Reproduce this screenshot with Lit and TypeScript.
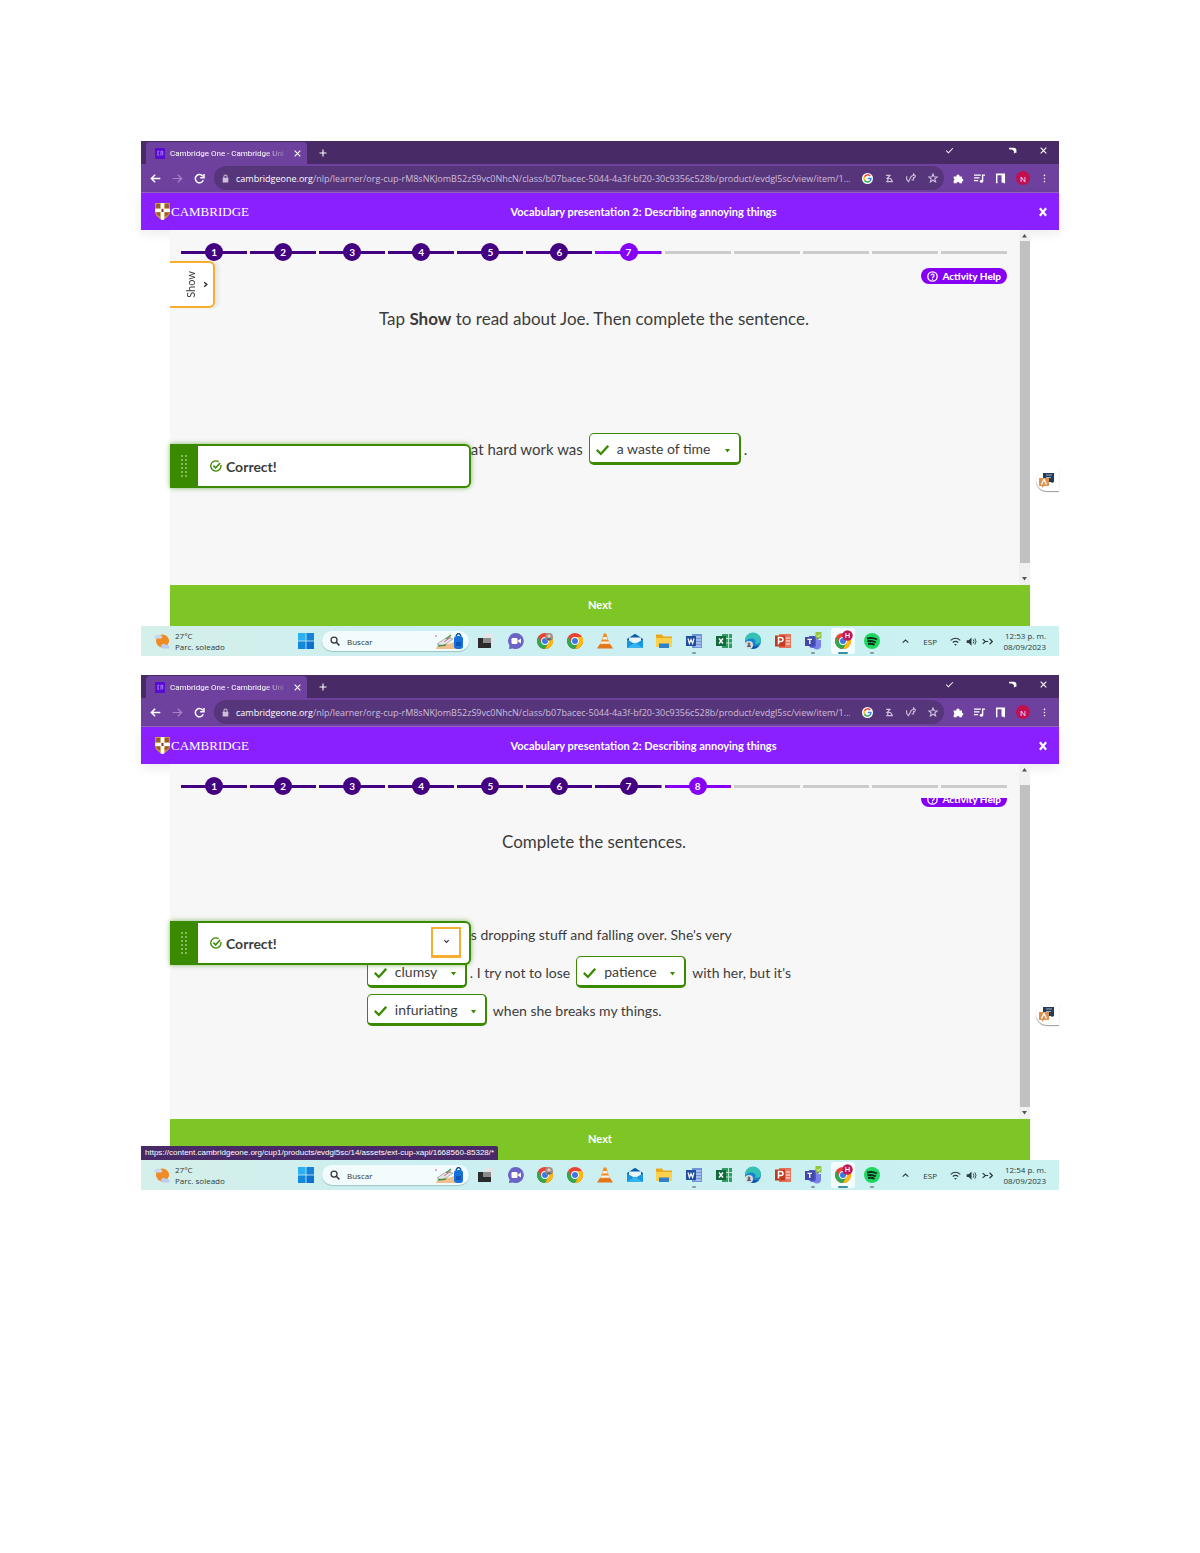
import { LitElement, html, css, svg, nothing } from "lit";
import { customElement, property } from "lit/decorators.js";
import { classMap } from "lit/directives/class-map.js";

type Piece = string | { answer: string };

interface Screen {
  title: string;
  step: number;
  prompt: unknown;
  lines: Piece[][];
  scrolled: boolean;
  drawer: boolean;
  expandable: boolean;
  clock: string;
  status: string;
}

const SCREENS: Screen[] = [
  {
    title: "Vocabulary presentation 2: Describing annoying things",
    step: 7,
    prompt: html`Tap <b>Show</b> to read about Joe. Then complete the sentence.`,
    lines: [["at hard work was", { answer: "a waste of time" }, "."]],
    scrolled: false,
    drawer: true,
    expandable: false,
    clock: "12:53 p. m.",
    status: "",
  },
  {
    title: "Vocabulary presentation 2: Describing annoying things",
    step: 8,
    prompt: html`Complete the sentences.`,
    lines: [
      ["s dropping stuff and falling over. She's very"],
      [{ answer: "clumsy" }, ". I try not to lose", { answer: "patience" }, "with her, but it's"],
      [{ answer: "infuriating" }, "when she breaks my things."],
    ],
    scrolled: true,
    drawer: false,
    expandable: true,
    clock: "12:54 p. m.",
    status:
      "https://content.cambridgeone.org/cup1/products/evdgl5sc/14/assets/ext-cup-xapi/1668560-85328/*",
  },
];

const base = css`
  :host {
    display: block;
    font-family: Lato, "Open Sans", sans-serif;
  }
  *,
  *::before,
  *::after {
    box-sizing: border-box;
  }
  button,
  input,
  select {
    font: inherit;
    color: inherit;
    background: none;
    border: 0;
    padding: 0;
    margin: 0;
    outline: 0;
  }
  button {
    display: grid;
    place-items: center;
    cursor: pointer;
  }
  svg {
    display: block;
    flex: none;
  }
`;

const draw = (size: number, body: unknown) =>
  html`<svg width=${size} height=${size} viewBox="0 0 16 16" fill="none" aria-hidden="true">${body}</svg>`;

const chromeBall = svg`
  <circle cx="8" cy="8" r="8" fill="#ea4335"/>
  <path d="M1.1 4A8 8 0 0 0 7.9 16l3.6-6H4.6z" fill="#2fa84f"/>
  <path d="M14.9 4A8 8 0 0 1 7.9 16l3.6-6L8.2 4z" fill="#fbbc05"/>
  <circle cx="8" cy="8" r="3.9" fill="#fff"/>
  <circle cx="8" cy="8" r="3" fill="#3b78e7"/>`;

const icons = {
  back: svg`<path d="M15 8H2M7.5 2.5 2 8l5.500 5.500" stroke="currentColor" stroke-width="2.200"/>`,
  forward: svg`<path d="M1 8h13M8.500 2.500 14 8l-5.500 5.500" stroke="currentColor" stroke-width="1.800"/>`,
  reload: svg`<path d="M13 5A6 6 0 1 0 13.500 10.500" stroke="currentColor" stroke-width="2.200"/><path d="M9 7h5.500V1.500" stroke="currentColor" stroke-width="2.200"/>`,
  lock: svg`<rect x="3" y="6.500" width="10" height="8.500" rx="1" fill="currentColor"/><path d="M5.200 7V4.500a2.800 2.800 0 0 1 5.600 0V7" stroke="currentColor" stroke-width="1.800"/>`,
  close: svg`<path d="m3 3 10 10M13 3 3 13" stroke="currentColor" stroke-width="2"/>`,
  heavyClose: svg`<path d="m3 2 10 12M13 2 3 14" stroke="currentColor" stroke-width="3.400"/>`,
  plus: svg`<path d="M8 1v14M1 8h14" stroke="currentColor" stroke-width="2.200"/>`,
  check: svg`<path d="m2 8 4 4 8-8" stroke="currentColor" stroke-width="1.800"/>`,
  restore: svg`<path d="M2 3h8a5 5 0 0 1 5 5v4h-3l-1.500 2V9L7 6H2z" fill="currentColor"/>`,
  google: svg`<circle cx="8" cy="8" r="8" fill="#fff"/>
    <path d="M12 4.500A5 5 0 0 0 3.600 5.700" stroke="#ea4335" stroke-width="2.200"/>
    <path d="M3.600 5.700a5 5 0 0 0 0 4.600" stroke="#fbbc05" stroke-width="2.200"/>
    <path d="M3.600 10.300A5 5 0 0 0 11.500 11.600" stroke="#34a853" stroke-width="2.200"/>
    <path d="M11.500 11.600A5 5 0 0 0 13 8H8.300" stroke="#4285f4" stroke-width="2.200"/>`,
  translate: svg`<path d="M2 2.500h8M9 2.500 4 8h6M2 13.500h12M5 8v5M10 8l3 5" stroke="currentColor" stroke-width="2.200"/>`,
  share: svg`<path d="M1 5v5l3 4 4-8M7 8c1-3 3-4 5-4V1.500L15.500 5 12 9V6.500" stroke="currentColor" stroke-width="1.800"/><path d="M9 11h4" stroke="currentColor" stroke-width="1.800"/>`,
  star: svg`<path d="m8 1.500 1.800 4.600 4.900.3-3.800 3.100 1.300 4.800L8 11.600l-4.200 2.700 1.300-4.800-3.800-3.100 4.900-.3z" stroke="currentColor" stroke-width="1.800"/>`,
  puzzle: svg`<path d="M1 5h4a2.300 2.300 0 1 1 4.500 0H13v3.500a2 2 0 1 1 0 4V15H9.500a2.200 2.200 0 0 0-4.300 0H1v-3.800a2.200 2.200 0 0 0 0-3.600z" fill="currentColor"/>`,
  music: svg`<path d="M0 3h10M0 7h8M0 11h6M12.500 12V3H16" stroke="currentColor" stroke-width="2"/><circle cx="10.800" cy="12" r="2.300" fill="currentColor"/>`,
  panel: svg`<path d="M2.500 15V2h11v13" stroke="currentColor" stroke-width="2.200"/><path d="M9.500 2h4v12h-4z" fill="currentColor"/>`,
  dots: svg`<circle cx="8" cy="2.500" r="1.400" fill="currentColor"/><circle cx="8" cy="8" r="1.400" fill="currentColor"/><circle cx="8" cy="13.500" r="1.400" fill="currentColor"/>`,
  help: svg`<circle cx="8" cy="8" r="6.800" stroke="currentColor" stroke-width="2"/><path d="M5.800 6.600a2.200 2.200 0 1 1 3.300 1.900Q8 9 8 10" stroke="currentColor" stroke-width="1.800"/><circle cx="8" cy="12" r="1" fill="currentColor"/>`,
  badge: svg`<path d="M14.500 6.500A6.800 6.800 0 1 1 11.500 2.200" stroke="#3a8a00" stroke-width="1.800"/><path d="m4.500 7.500 3 3 6-6.500" stroke="#3a8a00" stroke-width="2"/>`,
  windows: svg`<path d="M0 0h7.600v7.600H0z" fill="#2bb0f0"/><path d="M8.400 0H16v7.600H8.400z" fill="#1583dc"/><path d="M0 8.400h7.600V16H0z" fill="#1389dd"/><path d="M8.400 8.400H16V16H8.400z" fill="#0c72d0"/>`,
  lens: svg`<circle cx="6.500" cy="6.500" r="4.800" stroke="#333" stroke-width="2"/><path d="m10 10 5 5" stroke="#333" stroke-width="2.400"/>`,
  tasks: svg`<path d="M5 1h11v10H5z" fill="#e4e6e6"/><path d="M0 5h13v10H0z" fill="#2b2b2b"/><path d="M5 5h8v5H5z" fill="#8a8c8d"/>`,
  meet: svg`<path d="M8 0a8 8 0 1 1-3 15.500L.8 16l.8-3.300A8 8 0 0 1 8 0z" fill="#6b63c6"/><rect x="3.500" y="5" width="6" height="6" rx="1.200" fill="#fff"/><path d="m10 7.500 3-2v5l-3-2z" fill="#fff"/>`,
  chrome: chromeBall,
  chromeUser: svg`${chromeBall}<circle cx="12" cy="4" r="4" fill="#a58f84"/><circle cx="12" cy="3" r="1.600" fill="#e8d3c5"/><path d="M9.500 7a2.600 2.600 0 0 1 5 0z" fill="#5d6573"/>`,
  chromeTagged: svg`${chromeBall}<circle cx="12.500" cy="2.500" r="5.200" fill="#c2185b"/><path d="M10.800 5V0M14.200 5V0M10.800 2.500h3.400" stroke="#fff" stroke-width="1"/>`,
  cone: svg`<path d="M6.800.5h2.400L13 12H3z" fill="#f28a1c"/><path d="M6 4h4l.9 2.600H5.100zM4.300 8.500h7.400l.8 2.300h-9z" fill="#f6efe8"/><path d="M2.500 11.500h11L16 15.500H0z" fill="#e2761b"/>`,
  mail: svg`<path d="M0 6 8 .8 16 6v3H0z" fill="#0a5ea8"/><path d="M2 4.500h12V10H2z" fill="#e9f6fd"/><path d="M0 6.500 8 11l8-4.500V15H0z" fill="#1c94e0"/><path d="m0 15 8-5.500L16 15z" fill="#35b3f2"/>`,
  folder: svg`<path d="M0 1.500h6l1.500 2H16V14H0z" fill="#e9a91e"/><path d="M0 5h16v9H0z" fill="#fccf4d"/><path d="M3 10.500h10V15H3z" fill="#2d80c9"/>`,
  word: svg`<path d="M6 1h10v14H6z" fill="#6d93d8"/><path d="M9 4h6M9 7h6M9 10h6M9 13h6" stroke="#dce7fa" stroke-width="1"/><path d="M0 3h10v10H0z" fill="#1f4e9e"/><path d="m2 5.500 1.400 5L5 6.500l1.600 4 1.400-5" stroke="#fff" stroke-width="1.200"/>`,
  excel: svg`<path d="M6 1h10v14H6z" fill="#2f9e62"/><path d="M9 5.500h7M9 10h7M12.500 1v14" stroke="#bfe5cf" stroke-width="1"/><path d="M0 3h10v10H0z" fill="#11693a"/><path d="m3 5.500 4 5M7 5.500l-4 5" stroke="#fff" stroke-width="1.500"/>`,
  edge: svg`<circle cx="8" cy="8" r="8" fill="#1784d0"/><path d="M0 8a8 8 0 0 1 16-1c.3 3-3 4.500-6 3.500 2-3-1-5.500-4-5S0 8 0 8z" fill="#35c1b4"/><path d="M6 9c-1 3 3 6 8 3.500A8 8 0 0 1 6 15.500z" fill="#0c4fa0"/><circle cx="4" cy="12" r="4" fill="#d8dde2"/><path d="M2 14a2 2 0 0 1 4 0z" fill="#4f5a66"/><circle cx="4" cy="11" r="1.400" fill="#7b6a60"/>`,
  power: svg`<path d="M4 1h12v14H4z" fill="#e8735b"/><path d="M11 5h4M11 8h4M11 11h4" stroke="#fff" stroke-width="1.200"/><path d="M0 2.500h10v11H0z" fill="#c23b1e"/><path d="M3.500 11.500v-7H6a2 2 0 0 1 0 4H3.500" stroke="#fff" stroke-width="1.500"/>`,
  teams: svg`<circle cx="12" cy="4.500" r="2.300" fill="#5b62c4"/><path d="M8 7h8v5a3.500 3.500 0 0 1-8 1z" fill="#7b83eb"/><path d="M4 3h7v10a4 4 0 0 1-7 0z" fill="#5059c9"/><path d="M0 4h9.500v9H0z" fill="#4148ad"/><path d="M2.500 6.300H7M4.800 6.300V11" stroke="#fff" stroke-width="1.300"/><path d="M10.500-1h6v6.500h-6z" fill="#93c83e"/><path d="m12 2.500 1.200 1.200 2-2.200" stroke="#fff" stroke-width=".9"/>`,
  spotify: svg`<circle cx="8" cy="8" r="8" fill="#1ed760"/><path d="M3 5.500c3.500-1 7-.7 10 1M3.500 8.300c3-.8 5.800-.4 8.300 1M4 11c2.500-.6 4.600-.3 6.500.8" stroke="#0b2a17" stroke-width="2"/>`,
  caretUp: svg`<path d="m3 10 5-4.500L13 10" stroke="currentColor" stroke-width="2"/>`,
  wifi: svg`<path d="M1 6.500q7-6.500 14 0M4 9.500q4-3.500 8 0" stroke="currentColor" stroke-width="1.600"/><path d="m6 11.500 2 2.500 2-2.500z" fill="currentColor"/>`,
  sound: svg`<path d="M1 6h3l4-4v12l-4-4H1z" fill="currentColor"/><path d="M10.500 5q2 3 0 6M13 3.500q3 4.500 0 9" stroke="currentColor" stroke-width="1.300"/>`,
  battery: svg`<path d="M1 4.500 5 8l-4 3.500M5 8h4M11 4l4 4-4 4" stroke="currentColor" stroke-width="1.800"/>`,
  weather: svg`<circle cx="8.500" cy="8" r="6.500" fill="#f08a24"/><path d="M0 5.500C0 2 4 0 7 2.500c2 .5 1.500 3-.5 3H1z" fill="#c8d8f3"/><path d="M7 13.500c0-3 4-3.500 5-1.500 3-.5 5 3 2.500 3.500H8.500Q7 15 7 13.500z" fill="#b9cdf0"/>`,
  shield: svg`<path d="M1 0h14v8.500Q15 13 8 16 1 13 1 8.500z" fill="#c89a3c"/><path d="M2 1h4v4H2zM10 1h4v4h-4zM2 9h4v4L3 11zM10 9h4q0 2-4 4z" fill="#9c5a33"/><path d="M6.300 0h3.400v5.500H15v3H9.700v7L8 16l-1.700-.5v-7H1v-3h5.300z" fill="#fff"/><path d="M7 5.500h2v3H7z" fill="#8c3a2a"/>`,
};

@customElement("browser-chrome")
export class BrowserChrome extends LitElement {
  static styles = [
    base,
    css`
      :host {
        color: #fff;
        font-family: "Open Sans", "Noto Sans", sans-serif;
      }
      .tabs {
        height: 23px;
        display: flex;
        align-items: stretch;
        background: #472a66;
        padding: 0 8px 0 5px;
      }
      .tab {
        width: 161px;
        display: flex;
        align-items: center;
        gap: 5px;
        padding: 0 5px 0 9px;
        margin-top: 1px;
        border-radius: 4px 4px 0 0;
        background: #6f419f;
        font-family: Roboto, "Open Sans", sans-serif;
        font-size: 8px;
      }
      .favicon {
        width: 10px;
        height: 11px;
        display: grid;
        place-items: center;
        background: #5a0bd0;
        flex: none;
      }
      .tab-title {
        flex: 1;
        white-space: nowrap;
        -webkit-mask-image: linear-gradient(to right, #000 80%, transparent);
        mask-image: linear-gradient(to right, #000 80%, transparent);
      }
      .new-tab {
        width: 31px;
      }
      .window {
        margin-left: auto;
        display: flex;
      }
      .window button {
        width: 31px;
        height: 19px;
      }
      .window button:last-child {
        width: 16px;
        margin-left: 7px;
      }
      .window button:first-child {
        margin-right: 32px;
      }
      .bar {
        height: 29px;
        display: flex;
        align-items: center;
        background: #6f419f;
        border-bottom: 1px solid #9268b8;
        padding: 0 10px 0 9px;
      }
      .nav {
        display: flex;
        gap: 11px;
        padding-right: 9px;
      }
      .nav .off {
        color: #a583c8;
      }
      .address {
        flex: 1;
        min-width: 0;
        height: 24px;
        display: flex;
        align-items: center;
        gap: 12px;
        border-radius: 12px;
        background: #56357a;
        padding: 0 6px 0 7px;
        color: #cdbfdc;
        font-size: 9px;
      }
      .url {
        flex: 1;
        min-width: 0;
        display: flex;
        align-items: center;
      }
      .host {
        color: #fff;
      }
      .url input {
        flex: 1;
        min-width: 0;
      }
      .url-lock {
        padding-right: 6px;
      }
      .extras {
        display: flex;
        align-items: center;
        gap: 10px;
        padding-left: 9px;
      }
      .avatar {
        width: 14px;
        height: 14px;
        border-radius: 50%;
        background: #c2104f;
        font-size: 8px;
      }
    `,
  ];

  render() {
    return html`
      <div class="tabs">
        <div class="tab">
          <span class="favicon">${draw(7, svg`<path d="M5 3H2v9h3M9 13V3h4v9" stroke="#b98cff" stroke-width="2"/>`)}</span>
          <span class="tab-title">Cambridge One - Cambridge Uni</span>
          <button aria-label="Close tab">${draw(9, icons.close)}</button>
        </div>
        <button class="new-tab" aria-label="New tab">${draw(8, icons.plus)}</button>
        <div class="window">
          <button aria-label="Minimize">${draw(9, icons.check)}</button>
          <button aria-label="Restore">${draw(9, icons.restore)}</button>
          <button aria-label="Close">${draw(9, icons.close)}</button>
        </div>
      </div>
      <div class="bar">
        <div class="nav">
          <button aria-label="Back">${draw(11, icons.back)}</button>
          <button class="off" aria-label="Forward">${draw(11, icons.forward)}</button>
          <button aria-label="Reload">${draw(11, icons.reload)}</button>
        </div>
        <div class="address">
          <label class="url">
            <span class="url-lock">${draw(9, icons.lock)}</span>
            <span class="host">cambridgeone.org</span>
            <input
              aria-label="Address"
              value="/nlp/learner/org-cup-rM8sNKJomB52zS9vc0NhcN/class/b07bacec-5044-4a3f-bf20-30c9356c528b/product/evdgl5sc/view/item/1..."
            />
          </label>
          <button aria-label="Google">${draw(11, icons.google)}</button>
          <button aria-label="Translate">${draw(9, icons.translate)}</button>
          <button aria-label="Share">${draw(10, icons.share)}</button>
          <button aria-label="Bookmark">${draw(10, icons.star)}</button>
        </div>
        <div class="extras">
          <button aria-label="Extensions">${draw(11, icons.puzzle)}</button>
          <button aria-label="Media">${draw(11, icons.music)}</button>
          <button aria-label="Side panel">${draw(11, icons.panel)}</button>
          <button class="avatar">N</button>
          <button aria-label="Menu">${draw(9, icons.dots)}</button>
        </div>
      </div>
    `;
  }
}

@customElement("task-bar")
export class TaskBar extends LitElement {
  @property() clock = "";

  static styles = [
    base,
    css`
      :host {
        font-family: "Open Sans", "Noto Sans", sans-serif;
        color: #2a3a3c;
      }
      .bar {
        height: 30px;
        display: flex;
        align-items: center;
        background: linear-gradient(to right, #d5efe9, #cceff2 30%, #cbf1f1);
        padding: 0 13px;
        font-size: 8px;
        line-height: 11px;
      }
      .weather {
        width: 144px;
        display: flex;
        align-items: center;
        gap: 5px;
      }
      .search {
        width: 147px;
        height: 20px;
        display: flex;
        align-items: center;
        gap: 7px;
        margin-left: 8px;
        padding: 0 5px 0 8px;
        border-radius: 10px;
        background: #f3fcfc;
        box-shadow: 0 1px 1px #9fc4c4;
      }
      .search input {
        flex: 1;
        min-width: 0;
      }
      .search input::placeholder {
        color: #333;
        opacity: 1;
      }
      .apps {
        flex: 1;
        display: flex;
        justify-content: space-between;
        padding: 0 17px 0 5px;
      }
      .app {
        position: relative;
        width: 24px;
        height: 26px;
        border-radius: 3px;
      }
      .app svg {
        overflow: visible;
      }
      .current {
        background: #f3fdfd;
      }
      .open::after,
      .current::after {
        content: "";
        position: absolute;
        left: 10px;
        right: 10px;
        bottom: 0;
        height: 2px;
        border-radius: 1px;
        background: #8a9a9c;
      }
      .current::after {
        left: 7px;
        right: 7px;
        background: #3d8f9f;
      }
      .tray {
        display: flex;
        align-items: center;
        gap: 5px;
      }
      .lang {
        padding: 0 8px;
      }
      .time {
        width: 48px;
        text-align: right;
        white-space: nowrap;
      }
    `,
  ];

  private app(label: string, icon: unknown, state = "") {
    return html`<button class="app ${state}" aria-label=${label}>${draw(16, icon)}</button>`;
  }

  render() {
    return html`
      <div class="bar">
        <div class="weather">
          ${draw(16, icons.weather)}
          <div>27°C<br />Parc. soleado</div>
        </div>
        <button aria-label="Start">${draw(16, icons.windows)}</button>
        <label class="search">
          ${draw(10, icons.lens)}
          <input aria-label="Buscar" placeholder="Buscar" />
          <svg width="30" height="16" viewBox="0 0 30 16" aria-hidden="true">
            <path d="M2 15c4-6 10-2 18-6l1 7H2z" fill="#efc08d" />
            <path d="m3 11 9-6 7 1-10 7z" fill="#e3e9ea" stroke="#a9b0ad" />
            <path d="m4 13 8-1M12 6l5-4" stroke="#4f8f4a" stroke-width="1.500" />
            <path d="m10 9 7-5" stroke="#e06a8a" />
            <circle cx="2" cy="3" r="1" fill="#d98be0" />
            <rect x="20" y="3" width="9" height="13" rx="3" fill="#176fdc" />
            <path d="M22 3q2.500-5 5 0" stroke="#0d4fa8" stroke-width="1.500" fill="none" />
            <path d="M22 9h5v4h-5z" fill="#0c55b8" />
          </svg>
        </label>
        <nav class="apps">
          ${this.app("Task view", icons.tasks)} ${this.app("Chat", icons.meet)}
          ${this.app("Chrome profile", icons.chromeUser)} ${this.app("Chrome", icons.chrome)}
          ${this.app("VLC", icons.cone)} ${this.app("Mail", icons.mail)}
          ${this.app("Explorer", icons.folder)} ${this.app("Word", icons.word, "open")}
          ${this.app("Excel", icons.excel)} ${this.app("Edge", icons.edge)}
          ${this.app("PowerPoint", icons.power)} ${this.app("Teams", icons.teams, "open")}
          ${this.app("Chrome N", icons.chromeTagged, "current")}
          ${this.app("Spotify", icons.spotify, "open")}
        </nav>
        <div class="tray">
          ${draw(9, icons.caretUp)}
          <span class="lang">ESP</span>
          ${draw(11, icons.wifi)} ${draw(11, icons.sound)} ${draw(11, icons.battery)}
          <div class="time">${this.clock}<br />08/09/2023</div>
        </div>
      </div>
    `;
  }
}

@customElement("lesson-screen")
export class LessonScreen extends LitElement {
  @property({ attribute: false }) data!: Screen;

  static styles = [
    base,
    css`
      :host {
        color: #3c3c3c;
      }
      .screen {
        position: relative;
      }
      .header {
        position: relative;
        z-index: 1;
        height: 37px;
        display: flex;
        align-items: center;
        padding: 0 11px 0 13px;
        background: #8a20ff;
        color: #fff;
        box-shadow: 0 4px 12px rgb(0 0 0 / 8%);
      }
      .brand {
        display: flex;
        align-items: center;
        font: 13px "Liberation Serif", serif;
      }
      .title {
        flex: 1;
        margin: 0;
        font-size: 11px;
        font-weight: 700;
        text-align: center;
      }
      .body {
        position: relative;
        z-index: 2;
        height: 355px;
        display: flex;
        margin: 0 29px;
        background: #f7f7f7;
      }
      .main {
        flex: 1;
        min-width: 0;
        display: flex;
        flex-direction: column;
        padding: 13px 12px 0 11px;
      }
      .steps {
        display: flex;
        gap: 3px;
        list-style: none;
        margin: 0;
        padding: 0 0 3px;
      }
      .step {
        flex: 1;
        height: 18px;
        display: grid;
        place-items: center;
        background: linear-gradient(#cbcbcb, #cbcbcb) center / 100% 3px no-repeat;
      }
      .done {
        background-image: linear-gradient(#430080, #430080);
      }
      .now {
        background-image: linear-gradient(#8500f5, #8500f5);
      }
      .dot {
        width: 18px;
        height: 18px;
        border-radius: 50%;
        background: #430080;
        color: #fff;
        font-size: 10px;
        font-weight: 700;
        line-height: 18px;
        text-align: center;
      }
      .now .dot {
        background: #8500f5;
      }
      .scroller {
        flex: 1;
        min-height: 0;
        overflow: hidden;
      }
      .content {
        display: flex;
        flex-direction: column;
        padding-top: 4px;
      }
      .scrolled {
        margin-top: -11px;
      }
      .help {
        align-self: flex-end;
        height: 16px;
        display: flex;
        align-items: center;
        gap: 4px;
        padding: 0 6px;
        border-radius: 8px;
        background: #8500f5;
        color: #fff;
        font-size: 10px;
        font-weight: 900;
      }
      .prompt {
        margin: 24px 0 0;
        font-size: 17px;
        line-height: 22px;
        font-weight: 400;
        text-align: center;
      }
      .exercise {
        min-height: 238px;
        width: 55%;
        margin: 0 auto;
        display: flex;
        flex-direction: column;
        justify-content: center;
        font-size: 14px;
      }
      .line {
        height: 38px;
        display: flex;
        align-items: center;
        gap: 6px;
        white-space: nowrap;
      }
      .line:first-child {
        padding-left: 104px;
      }
      .line:only-child {
        font-size: 15px;
      }
      .answer {
        position: relative;
        display: flex;
      }
      .answer + .tight {
        margin-left: -3px;
      }
      .answer select {
        appearance: none;
        height: 32px;
        padding: 0 27px;
        border: 1px solid #3a8a00;
        border-width: 1px 2px 3px 1px;
        border-radius: 5px;
        background: #fff;
        font-size: 14px;
      }
      .answer svg {
        position: absolute;
        top: 10px;
        left: 7px;
      }
      .answer svg.caret {
        top: 16px;
        left: auto;
        right: 11px;
      }
      .rail {
        width: 11px;
        display: flex;
        flex-direction: column;
        align-items: center;
        gap: 2px;
        background: #f1f1f1;
        padding: 4px 0;
        color: #555;
      }
      .thumb {
        width: 10px;
        flex: 1;
        background: #c1c1c1;
        margin: 1px 0 12px;
      }
      .low .thumb {
        margin: 11px 0 2px;
      }
      .drawer {
        position: absolute;
        top: 31px;
        left: 0;
        width: 45px;
        height: 47px;
        display: flex;
        align-items: center;
        justify-content: flex-end;
        gap: 5px;
        padding-right: 4px;
        border: 2px solid #f7ae2f;
        border-left: 0;
        border-radius: 0 6px 6px 0;
        background: #fff;
        box-shadow: 4px 0 3px rgb(0 0 0 / 6%);
        font-size: 11px;
      }
      .drawer span {
        writing-mode: vertical-rl;
        rotate: 180deg;
      }
      .toast {
        position: absolute;
        top: 214px;
        left: 0;
        width: 35%;
        height: 44px;
        display: flex;
        align-items: center;
        gap: 4px;
        border: 2px solid #3a8a00;
        border-left: 0;
        border-radius: 0 6px 6px 0;
        background: #fff;
        box-shadow: 0 0 5px rgb(58 138 0 / 60%);
        font-size: 14px;
        font-weight: 700;
        padding-right: 8px;
      }
      .raised {
        top: 157px;
      }
      .grip {
        width: 28px;
        align-self: stretch;
        display: grid;
        place-items: center;
        margin-right: 8px;
        background: #3a8a00;
      }
      .expand {
        width: 30px;
        height: 31px;
        margin: 0 0 2px auto;
        border: 2px solid #f7ae2f;
        border-bottom-width: 3px;
      }
      .next {
        position: relative;
        z-index: 2;
        width: calc(100% - 58px);
        height: 41px;
        margin-left: 29px;
        padding-bottom: 3px;
        background: #7ec626;
        color: #fff;
        font-size: 11px;
        font-weight: 700;
      }
      .status {
        position: absolute;
        z-index: 3;
        left: 0;
        bottom: 30px;
        padding: 0 4px;
        border-radius: 0 2px 0 0;
        background: #472a66;
        color: #fff;
        font: 8px/14px "Liberation Sans", sans-serif;
      }
      .float {
        position: absolute;
        right: 0;
        top: 328px;
        width: 23px;
        height: 22px;
        padding-right: 2px;
        border-radius: 11px 0 0 11px;
        background: #fff;
        box-shadow: 0 1px 1px #999;
      }
    `,
  ];

  private piece(p: Piece) {
    if (typeof p === "string")
      return html`<span class=${classMap({ tight: p.startsWith(".") })}>${p}</span>`;
    return html`<span class="answer">
      <select aria-label="Answer">
        <option>${p.answer}</option>
      </select>
      ${draw(13, svg`<path d="m1 8.500 5 5 9-10" stroke="#3a8a00" stroke-width="2.800"/>`)}
      <svg class="caret" width="5" height="4" viewBox="0 0 5 4"><path d="M0 0h5L2.500 3.500z" fill="#3a8a00" /></svg>
    </span>`;
  }

  render() {
    const d = this.data;
    const arrow = (path: string) =>
      html`<svg width="5" height="4" viewBox="0 0 5 4" aria-hidden="true"><path d=${path} fill="currentColor" /></svg>`;
    return html`
      <section class="screen">
        <browser-chrome></browser-chrome>
        <header class="header">
          <div class="brand">${draw(17, icons.shield)}CAMBRIDGE</div>
          <h1 class="title">${d.title}</h1>
          <button aria-label="Close">${draw(10, icons.heavyClose)}</button>
        </header>
        <div class="body">
          <div class="main">
            <ol class="steps">
              ${Array.from({ length: 12 }, (_, i) => {
                const n = i + 1;
                return html`<li class=${classMap({ step: true, done: n < d.step, now: n === d.step })}>
                  ${n <= d.step ? html`<span class="dot">${n}</span>` : nothing}
                </li>`;
              })}
            </ol>
            <div class="scroller">
              <div class=${classMap({ content: true, scrolled: d.scrolled })}>
                <button class="help">${draw(11, icons.help)} Activity Help</button>
                <h2 class="prompt">${d.prompt}</h2>
                <div class="exercise">
                  ${d.lines.map((l) => html`<div class="line">${l.map((p) => this.piece(p))}</div>`)}
                </div>
              </div>
            </div>
          </div>
          <div class=${classMap({ rail: true, low: d.scrolled })}>
            ${arrow("M2.500 0 5 3.500H0z")}
            <div class="thumb"></div>
            ${arrow("M0 0h5L2.500 3.500z")}
          </div>
          ${d.drawer
            ? html`<button class="drawer">
                <span>Show</span>${draw(7, svg`<path d="m5 3 6 5-6 5" stroke="#222" stroke-width="3"/>`)}
              </button>`
            : nothing}
          <div class=${classMap({ toast: true, raised: d.expandable })} role="status">
            <div class="grip">
              <svg width="6" height="22" viewBox="0 0 6 22" aria-hidden="true">
                <path d="M1 0v22M5 0v22" stroke="#9cc97f" stroke-width="1.500" stroke-dasharray="2 2" />
              </svg>
            </div>
            ${draw(12, icons.badge)} Correct!
            ${d.expandable
              ? html`<button class="expand" aria-label="Expand">
                  ${draw(7, svg`<path d="m3 5 5 5 5-5" stroke="#333" stroke-width="2.600"/>`)}
                </button>`
              : nothing}
          </div>
        </div>
        <button class="next">Next</button>
        <button class="float" aria-label="Translate page">
          <svg width="17" height="16" viewBox="0 0 17 16" aria-hidden="true">
            <path d="M5 1h11v9l-2 1-1-1H5z" fill="#243a56" />
            <path d="M8 3h6M8 5.500h5" stroke="#9fb4c8" />
            <path d="M1 6h10v8H6l-2 2v-2H1z" fill="#dd9450" />
            <path d="m3.500 12.500 2.500-5 2.500 5" stroke="#fff" stroke-width="1.300" fill="none" />
          </svg>
        </button>
        ${d.status ? html`<div class="status">${d.status}</div>` : nothing}
        <task-bar .clock=${d.clock}></task-bar>
      </section>
    `;
  }
}

@customElement("app-root")
export class AppRoot extends LitElement {
  static styles = css`
    :host {
      display: block;
      min-height: 100vh;
      background: #fff;
    }
    .page {
      display: flex;
      flex-direction: column;
      gap: 19px;
      padding: 141px;
    }
  `;

  render() {
    return html`<main class="page">
      ${SCREENS.map((s) => html`<lesson-screen .data=${s}></lesson-screen>`)}
    </main>`;
  }
}
